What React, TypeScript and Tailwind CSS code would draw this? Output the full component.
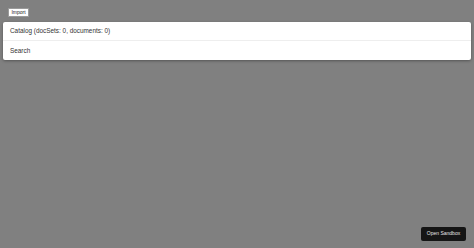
export default function App() {
  return (
    <div className="relative w-[474px] h-[248px] bg-[#808080] font-['Liberation_Sans',Arial,sans-serif] overflow-hidden">
      <div className="pt-[8px] pl-[8px]">
        <button
          type="button"
          className="block h-[9px] w-[21px] bg-white border border-[#9a9a9a] text-[5px] leading-[7px] text-[#222]"
        >
          Import
        </button>
      </div>
      <div className="mx-[3px] mt-[5px] bg-white rounded-[2px] shadow-[0_1px_3px_rgba(0,0,0,0.35)]">
        <div className="h-[19px] flex items-center pl-[7px] text-[6.4px] text-[#333] border-b border-[#eeeeee]">
          Catalog (docSets: 0, documents: 0)
        </div>
        <div className="h-[19px] flex items-center pl-[7px] text-[6.4px] text-[#333]">
          Search
        </div>
      </div>
      <button
        type="button"
        className="absolute right-[8px] bottom-[7px] h-[14px] w-[45px] bg-[#151515] rounded-[2px] text-[5px] text-[#e5e5e5]"
      >
        Open Sandbox
      </button>
    </div>
  );
}
